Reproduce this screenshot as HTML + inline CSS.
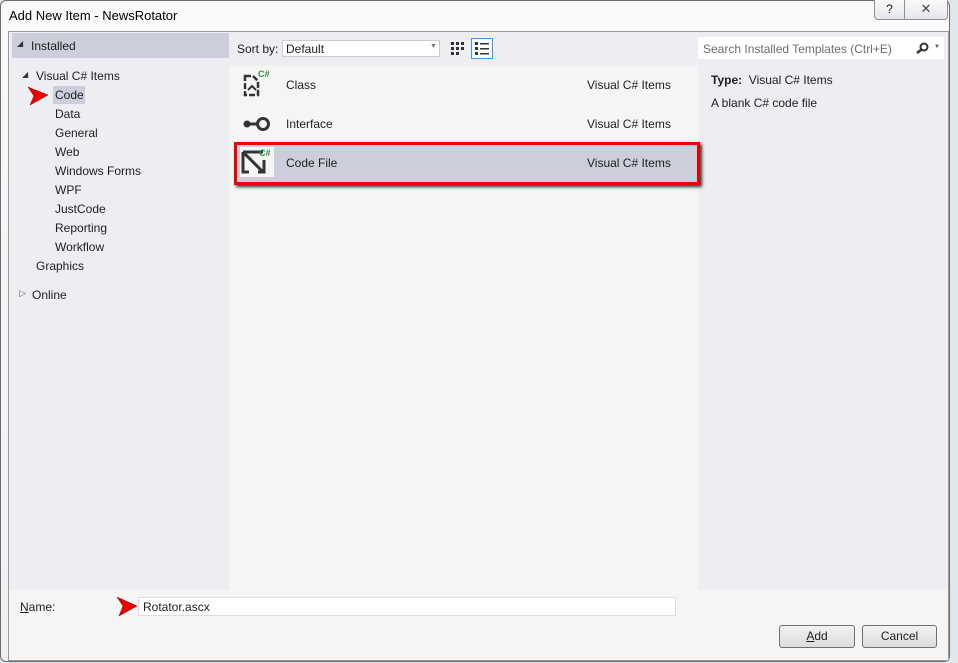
<!DOCTYPE html>
<html><head><meta charset="utf-8"><style>
*{margin:0;padding:0;box-sizing:border-box}
body{width:958px;height:663px;background:#dfe6ec;font-family:"Liberation Sans","DejaVu Sans",sans-serif;font-size:12px;color:#1e1e1e;position:relative;overflow:hidden}
.abs{position:absolute}
.win{left:0;top:0;width:950px;height:662px;background:linear-gradient(#fafafa,#eef0f2);border:1px solid #6d6d6d;border-radius:6px}
.content{left:8px;top:31px;width:941px;height:630px;background:#f5f5f5;border:1px solid #9a9a9a}
.t{position:absolute;white-space:nowrap}
</style></head><body>
<div class="abs win"></div>
<div class="t" style="left:9px;top:8px;font-size:13px;color:#000">Add New Item - NewsRotator</div>
<div class="abs" style="left:874px;top:0;width:31px;height:20px;border:1px solid #8b9099;border-top:none;border-radius:0 0 0 4px;background:linear-gradient(#fafafa,#e4e6ea);text-align:center;font-size:12px;line-height:18px">?</div>
<div class="abs" style="left:904px;top:0;width:44px;height:20px;border:1px solid #8b9099;border-top:none;border-radius:0 0 4px 0;background:linear-gradient(#fafafa,#e4e6ea);text-align:center;font-size:13px;line-height:18px;color:#444">✕</div>
<div class="abs content"></div>
<!-- right -->
<div class="abs" style="left:698px;top:32px;width:250px;height:558px;background:#eeeef2"></div>
<div class="abs" style="left:698px;top:37px;width:246px;height:22px;background:#fff"></div>
<div class="t" style="left:703px;top:42px;color:#6d6d6d">Search Installed Templates (Ctrl+E)</div>
<svg class="abs" style="left:916px;top:42px" width="14" height="12"><circle cx="8" cy="5" r="3.5" fill="none" stroke="#333" stroke-width="2"/><line x1="5.5" y1="7.5" x2="1" y2="11" stroke="#333" stroke-width="2.5"/></svg>
<div class="t" style="left:934px;top:44px;font-size:6px;color:#555">▼</div>
<div class="t" style="left:711px;top:73px"><b>Type:</b>&nbsp; Visual C# Items</div>
<div class="t" style="left:711px;top:96px">A blank C# code file</div>
<!-- left panel -->
<div class="abs" style="left:9px;top:32px;width:220px;height:558px;background:#eeeef2"></div>
<div class="abs" style="left:12px;top:33px;width:217px;height:25px;background:#cccedb"></div>
<div class="t" style="left:17px;top:39px;font-size:8px;color:#333">◢</div>
<div class="t" style="left:31px;top:39px">Installed</div>
<div class="t" style="left:22px;top:70px;font-size:8px;color:#333">◢</div>
<div class="t" style="left:36px;top:69px">Visual C# Items</div>
<div class="abs" style="left:53px;top:86px;width:32px;height:18px;background:#cccedb"></div>
<div class="t" style="left:55px;top:88px">Code</div>
<div class="t" style="left:55px;top:107px">Data</div>
<div class="t" style="left:55px;top:126px">General</div>
<div class="t" style="left:55px;top:145px">Web</div>
<div class="t" style="left:55px;top:164px">Windows Forms</div>
<div class="t" style="left:55px;top:183px">WPF</div>
<div class="t" style="left:55px;top:202px">JustCode</div>
<div class="t" style="left:55px;top:221px">Reporting</div>
<div class="t" style="left:55px;top:240px">Workflow</div>
<div class="t" style="left:36px;top:259px">Graphics</div>
<div class="t" style="left:19px;top:288px;font-size:9px;color:#666">▷</div>
<div class="t" style="left:32px;top:288px">Online</div>
<svg class="abs" style="left:26px;top:86px" width="24" height="20"><polygon points="2,1 22,9 4,19 8,10" fill="#e00" stroke="#700" stroke-width="0.5"/></svg>
<!-- middle -->
<div class="abs" style="left:229px;top:32px;width:469px;height:34px;background:#eeeef2"></div>
<div class="t" style="left:237px;top:42px">Sort by:</div>
<div class="abs" style="left:282px;top:40px;width:158px;height:17px;background:#fff;border:1px solid #ccc"></div>
<div class="t" style="left:286px;top:42px">Default</div>
<div class="t" style="left:430px;top:43px;font-size:7px;color:#777">▼</div>
<svg class="abs" style="left:450px;top:41px" width="16" height="16"><g fill="#333"><rect x="1" y="1" width="3" height="3"/><rect x="6" y="1" width="3" height="3"/><rect x="11" y="1" width="3" height="3"/><rect x="1" y="6" width="3" height="3"/><rect x="6" y="6" width="3" height="3"/><rect x="11" y="6" width="3" height="3"/><rect x="1" y="11" width="3" height="3"/><rect x="6" y="11" width="3" height="3"/></g></svg>
<div class="abs" style="left:471px;top:38px;width:22px;height:21px;border:1px solid #3399ff;background:#fff"></div>
<svg class="abs" style="left:475px;top:42px" width="15" height="14"><g fill="#333"><rect x="0" y="0" width="3" height="3"/><rect x="5" y="1" width="9" height="1.5"/><rect x="0" y="5" width="3" height="3"/><rect x="5" y="6" width="9" height="1.5"/><rect x="0" y="10" width="3" height="3"/><rect x="5" y="11" width="9" height="1.5"/></g></svg>
<div class="abs" style="left:233px;top:66px;width:465px;height:524px;background:#f5f5f5"></div>
<svg class="abs" style="left:242px;top:70px" width="30" height="30"><path d="M3 6h8l5 5v14H3z" fill="none" stroke="#333" stroke-width="2.5" stroke-dasharray="6 2"/><path d="M6 20l4-4 4 4" stroke="#333" stroke-width="2" fill="none"/><text x="16" y="7" font-size="9" font-weight="bold" fill="#388a34" font-family="Liberation Sans">C#</text></svg>
<div class="t" style="left:286px;top:78px">Class</div>
<div class="t" style="left:587px;top:78px">Visual C# Items</div>
<svg class="abs" style="left:242px;top:114px" width="30" height="20"><circle cx="5" cy="10" r="3.5" fill="#333"/><rect x="5" y="8.5" width="10" height="3" fill="#333"/><circle cx="21" cy="10" r="5.5" fill="none" stroke="#333" stroke-width="3"/></svg>
<div class="t" style="left:286px;top:117px">Interface</div>
<div class="t" style="left:587px;top:117px">Visual C# Items</div>
<div class="abs" style="left:234px;top:142px;width:466px;height:43px;border:3px solid #e00;box-shadow:2px 2px 3px #333;background:#cccedb"></div>
<svg class="abs" style="left:240px;top:147px" width="34" height="30"><rect x="0" y="0" width="34" height="30" fill="#f5f5f5"/><path d="M3 5h20M3 5v20h6M3 5l20 20M24 13v12h-6" stroke="#333" stroke-width="3" fill="none"/><text x="19" y="9" font-size="9" font-weight="bold" fill="#388a34" font-family="Liberation Sans">C#</text></svg>
<div class="t" style="left:286px;top:156px">Code File</div>
<div class="t" style="left:587px;top:156px">Visual C# Items</div>
<!-- bottom -->
<div class="t" style="left:20px;top:600px"><u>N</u>ame:</div>
<svg class="abs" style="left:115px;top:596px" width="24" height="22"><polygon points="2,1 22,10 4,20 8,10" fill="#e00" stroke="#700" stroke-width="0.5"/></svg>
<div class="abs" style="left:138px;top:597px;width:538px;height:19px;background:#fff;border:1px solid #ddd"></div>
<div class="t" style="left:143px;top:600px">Rotator.ascx</div>
<div class="abs" style="left:779px;top:625px;width:76px;height:23px;border:1px solid #707070;border-radius:3px;background:linear-gradient(#f2f2f2,#dcdcdc);text-align:center;line-height:21px"><u>A</u>dd</div>
<div class="abs" style="left:862px;top:625px;width:75px;height:23px;border:1px solid #707070;border-radius:3px;background:linear-gradient(#f2f2f2,#dcdcdc);text-align:center;line-height:21px">Cancel</div>
</body></html>
